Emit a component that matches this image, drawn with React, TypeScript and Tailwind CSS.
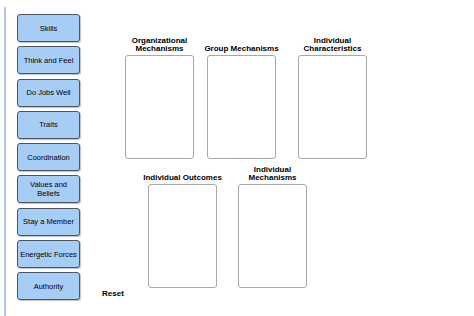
const items = [
  "Skills",
  "Think and Feel",
  "Do Jobs Well",
  "Traits",
  "Coordination",
  "Values and Beliefs",
  "Stay a Member",
  "Energetic Forces",
  "Authority",
];

function Bin({ title, className }: { title: string; className?: string }) {
  return (
    <div className={`flex w-[69px] flex-col items-center ${className ?? ""}`}>
      <div className="flex h-[18px] items-end pb-[2px]">
        <p className="text-center text-[8px] font-bold leading-[8px] text-black">{title}</p>
      </div>
      <div className="h-[104px] w-full rounded-[3px] border border-[#a8a8a8] bg-white" />
    </div>
  );
}

export default function App() {
  return (
    <div
      className="relative h-[316px] w-[474px] overflow-hidden bg-white"
      style={{ fontFamily: '"Liberation Sans", Arial, sans-serif' }}
    >
      <div className="flex h-full">
        {/* left rail */}
        <div className="ml-[4px] mt-[7px] w-[2px] self-stretch bg-[#b4c6f2]" />

        {/* draggable items */}
        <div className="ml-[11px] mt-[14px] flex flex-col gap-[4.3px]">
          {items.map((it) => (
            <div
              key={it}
              className="flex h-[28px] w-[63px] items-center justify-center rounded-[3px] border border-[#4a5563] bg-[#a6cdf6] px-[2px] shadow-[1px_1px_1px_rgba(0,0,0,0.25)]"
            >
              <span className="text-center text-[7.5px] leading-[9px] text-black">{it}</span>
            </div>
          ))}
        </div>

        {/* bins */}
        <div className="flex flex-col">
          <div className="ml-[45px] mt-[37px] flex">
            <Bin title={"Organizational\nMechanisms"} className="whitespace-pre-line" />
            <Bin title="Group Mechanisms" className="ml-[13px] [&_p]:whitespace-nowrap" />
            <Bin title={"Individual\nCharacteristics"} className="ml-[22px] whitespace-pre-line" />
          </div>
          <div className="ml-[68px] mt-[7px] flex">
            <Bin title="Individual Outcomes" className="[&_p]:whitespace-nowrap" />
            <Bin title={"Individual\nMechanisms"} className="ml-[21px] whitespace-pre-line" />
          </div>
        </div>
      </div>

      <span className="absolute left-[102px] top-[288px] text-[8px] font-bold text-black">Reset</span>
    </div>
  );
}
